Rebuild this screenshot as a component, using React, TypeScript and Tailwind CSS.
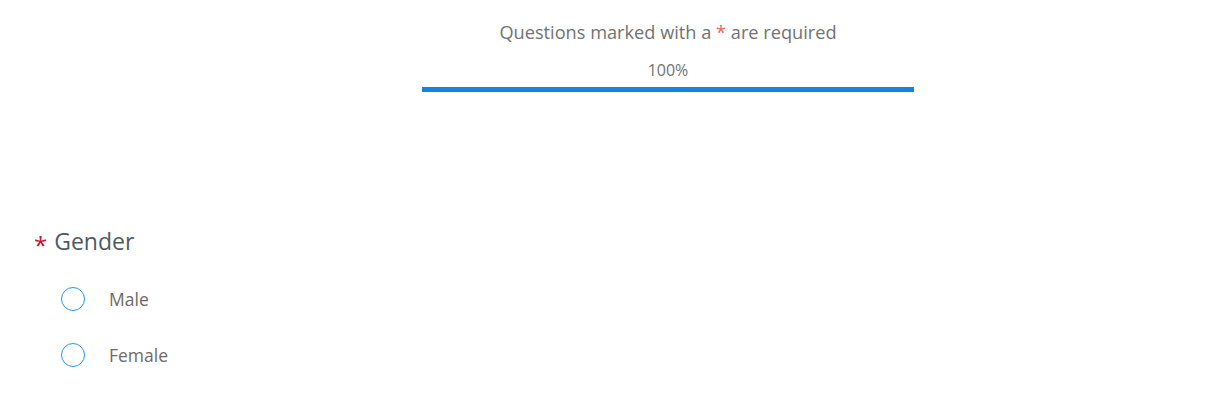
import React from "react";

const font = { fontFamily: '"Open Sans", "Noto Sans", sans-serif' };

function Radio({ label }: { label: string }) {
  return (
    <div className="flex items-center h-[56px]">
      <div className="ml-[61px] w-[24px] h-[24px] rounded-full border border-[#2196f3] bg-white" />
      <span className="ml-[24px] text-[17.5px] text-[#6e6a66]">{label}</span>
    </div>
  );
}

export default function App() {
  return (
    <div className="w-[1220px] h-[411px] bg-white" style={font}>
      <div className="ml-[422px] w-[492px] pt-[20px] text-center">
        <div className="text-[18.2px] leading-[24px] text-[#727272]">
          Questions marked with a <span className="text-[#f0605e]">*</span> are required
        </div>
        <div className="mt-[14px] text-[16px] leading-[24px] text-[#727272]">100%</div>
        <div className="mt-[5px] h-[5px] w-full bg-[#1185e0]" />
      </div>
      <div className="mt-[133px] ml-[34px] flex items-center h-[32px]">
        <span className="text-[24px] leading-none text-[#c8102e] mr-[7px] mt-[8px]">*</span>
        <span className="text-[23px] text-[#505a64]">Gender</span>
      </div>
      <div className="mt-[14px]">
        <Radio label="Male" />
        <Radio label="Female" />
      </div>
    </div>
  );
}
